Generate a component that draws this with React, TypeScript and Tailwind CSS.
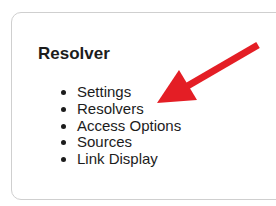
const items = ["Settings", "Resolvers", "Access Options", "Sources", "Link Display"];

export default function App() {
  return (
    <div className="relative h-[206px] w-[276px] overflow-hidden bg-white font-['Liberation_Sans',Arial,sans-serif] text-[#1c1c1c]">
      <div className="ml-[11px] mt-[12px] h-[188px] w-[300px] rounded-[10px] border border-[#cfcfcf] pl-[26px] pt-[31px]">
        <h2 className="text-[17px] font-bold leading-[20px]">Resolver</h2>
        <ul className="mt-[20px] list-disc pl-[39px] text-[15px] leading-[16.8px]">
          {items.map((item) => (
            <li key={item}>{item}</li>
          ))}
        </ul>
      </div>
      <svg
        className="absolute left-0 top-0"
        width="276"
        height="206"
        viewBox="0 0 276 206"
      >
        <line x1="258" y1="45" x2="184" y2="88" stroke="#e41e25" strokeWidth="7" />
        <polygon points="157,103 179,70 197,100" fill="#e41e25" />
      </svg>
    </div>
  );
}
